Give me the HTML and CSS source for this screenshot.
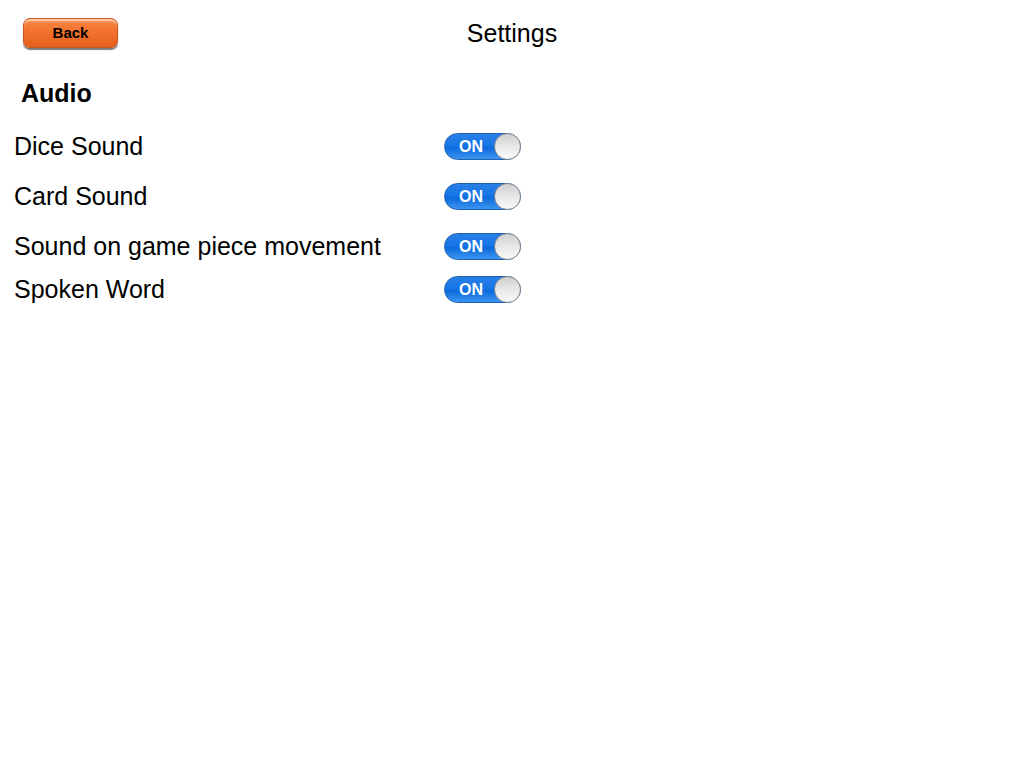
FILE: index.html
```html
<!DOCTYPE html>
<html>
<head>
<meta charset="utf-8">
<link rel="stylesheet" href="styles.css">
</head>
<body>
<div class="page">
  <header class="topbar">
    <div class="left"><button class="back-btn">Back</button></div>
    <h1 class="title">Settings</h1>
    <div class="right"></div>
  </header>
  <h2 class="section">Audio</h2>
  <div class="list">
    <div class="row"><span class="label">Dice Sound</span><span class="toggle"><span class="on">ON</span><span class="knob"></span></span></div>
    <div class="row"><span class="label">Card Sound</span><span class="toggle"><span class="on">ON</span><span class="knob"></span></span></div>
    <div class="row"><span class="label">Sound on game piece movement</span><span class="toggle"><span class="on">ON</span><span class="knob"></span></span></div>
    <div class="row tight"><span class="label">Spoken Word</span><span class="toggle"><span class="on">ON</span><span class="knob"></span></span></div>
  </div>
</div>
</body>
</html>
```
FILE: styles.css
```css
html, body {
  margin: 0;
  padding: 0;
  background: #fff;
}
body {
  font-family: "Liberation Sans", Arial, sans-serif;
  color: #000;
  width: 1024px;
  height: 768px;
}
.page {
  width: 1024px;
}
.topbar {
  display: grid;
  grid-template-columns: 1fr auto 1fr;
  align-items: center;
  height: 50px;
  padding-top: 8px;
}
.left {
  padding-left: 23px;
}
.back-btn {
  display: block;
  width: 95px;
  height: 30px;
  border: 1px solid #c9561c;
  border-radius: 7px;
  background: linear-gradient(#f9a773 0%, #f57e3c 18%, #ef6f2a 55%, #e65f1c 100%);
  box-shadow: inset 0 2px 0 rgba(255,220,190,0.7), 0 2px 1px #7a7a7a;
  font-family: "Liberation Sans", Arial, sans-serif;
  font-weight: bold;
  font-size: 15px;
  color: #000;
  padding: 0 0 2px 0;
  margin-top: 0;
}
.title {
  margin: 0;
  font-weight: normal;
  font-size: 25px;
  line-height: 28px;
  padding-bottom: 1px;
}
.section {
  margin: 0;
  padding: 21px 0 0 21px;
  font-size: 25px;
  font-weight: bold;
  line-height: 28px;
}
.list {
  padding-top: 21px;
}
.row {
  display: grid;
  grid-template-columns: 430px auto;
  align-items: center;
  padding-left: 14px;
  height: 36px;
  margin-bottom: 14px;
}
.row.tight {
  margin-top: -7px;
}
.label {
  font-size: 25px;
  line-height: 28px;
}
.toggle {
  position: relative;
  display: block;
  width: 77px;
  height: 27px;
  border-radius: 14px;
  box-sizing: border-box;
  border: 1px solid #1d5fb0;
  background: linear-gradient(#2a7fe6 0%, #1676e6 45%, #0b6bdc 55%, #3d94f0 100%);
}
.on {
  position: absolute;
  left: 14px;
  top: 0;
  line-height: 25px;
  font-size: 16px;
  font-weight: bold;
  color: #fff;
}
.knob {
  position: absolute;
  right: -1px;
  top: -1px;
  width: 27px;
  height: 27px;
  box-sizing: border-box;
  border-radius: 50%;
  border: 1px solid #8a8a8a;
  background: linear-gradient(#cfcfcf 0%, #e8e8e8 50%, #fafafa 100%);
}
```
